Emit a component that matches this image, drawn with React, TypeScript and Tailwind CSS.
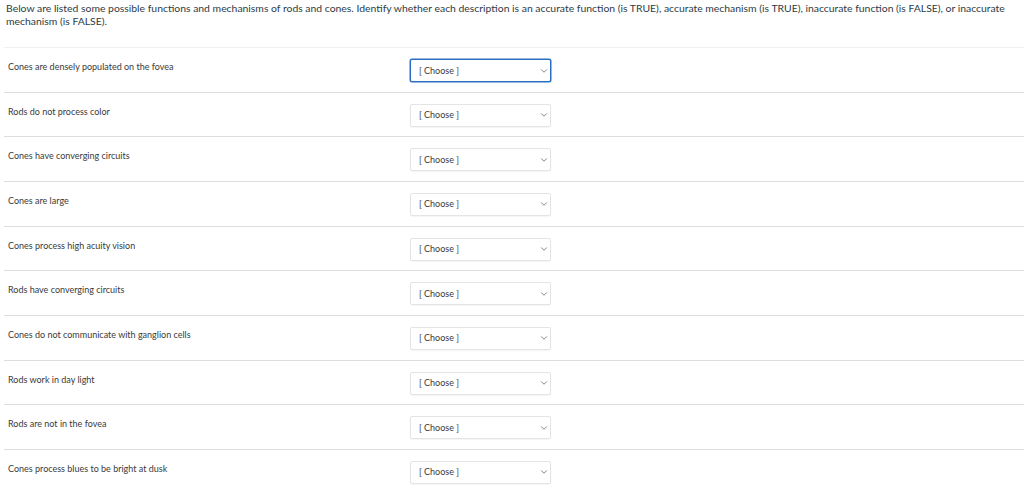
import { ChevronDown } from "lucide-react"

const ITEMS = [
    "Cones are densely populated on the fovea",
    "Rods do not process color",
    "Cones have converging circuits",
    "Cones are large",
    "Cones process high acuity vision",
    "Rods have converging circuits",
    "Cones do not communicate with ganglion cells",
    "Rods work in day light",
    "Rods are not in the fovea",
    "Cones process blues to be bright at dusk",
]

function Dropdown({ focused }: { focused?: boolean }) {
    return (
        <div
            className={`flex items-center justify-between w-[141px] h-[23px] pl-[8px] pr-[1px] bg-white rounded-[2px] ${
                focused
                    ? "border border-[#2b6fc2] shadow-[0_0_0_0.5px_#2b6fc2]"
                    : "border border-[#e4e4e4] shadow-[0_1px_1px_rgba(0,0,0,0.04)]"
            }`}
        >
            <span className="text-[9px] leading-[10px] text-[#3a3a3a]">[ Choose ]</span>
            <ChevronDown className="w-[10px] h-[10px] text-[#555]" strokeWidth={1.75} />
        </div>
    )
}

export default function App() {
    return (
        <div className="w-[1024px] h-[496px] overflow-hidden bg-white font-['Lato','Noto_Sans',sans-serif] text-[#2d3b45]">
            {/* Intro */}
            <p className="pl-[6px] pr-[12px] pt-[2px] text-[10.4px] leading-[12.5px]">
                Below are listed some possible functions and mechanisms of rods and cones. Identify whether each
                description is an accurate function (is TRUE), accurate mechanism (is TRUE), inaccurate function (is
                FALSE), or inaccurate mechanism (is FALSE).
            </p>

            {/* Rows */}
            <div className="mt-[20px] pl-[4px]">
                {ITEMS.map((item, i) => (
                    <div
                        key={item}
                        className={`flex items-start h-[44.67px] border-t ${
                            i === 0 ? "border-[#f0f0f0]" : "border-[#dddddd]"
                        }`}
                    >
                        <div className="w-[406px] pl-[4px] pt-[13px] text-[9px] leading-[11px] text-[#3a3a3a]">
                            {item}
                        </div>
                        <div className="pt-[11px]">
                            <Dropdown focused={i === 0} />
                        </div>
                    </div>
                ))}
            </div>
        </div>
    )
}
